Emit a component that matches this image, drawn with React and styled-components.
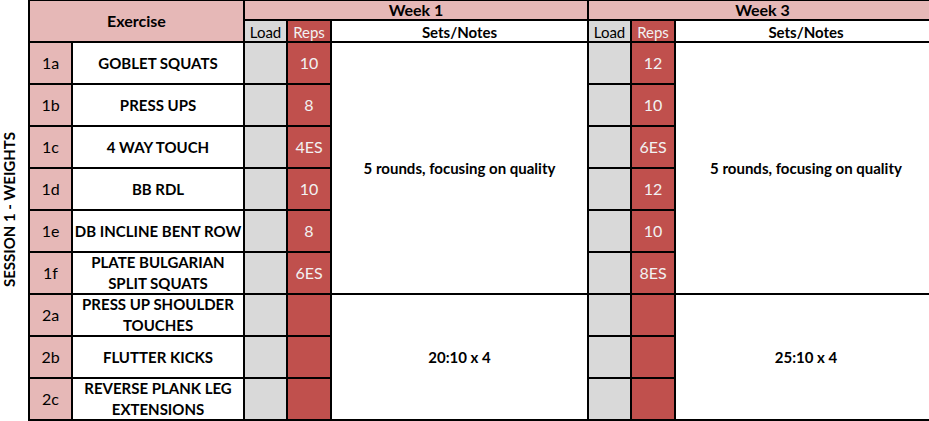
import React from "react";
import styled, { createGlobalStyle } from "styled-components";

const GlobalStyle = createGlobalStyle`
  html, body {
    margin: 0;
    padding: 0;
    background: #ffffff;
    overflow: hidden;
  }
  body {
    font-family: "Lato", "Liberation Sans", sans-serif;
    font-size: 15px;
    color: #000000;
  }
`;

const pink = "#E6B8B7";
const red = "#C0504D";
const grey = "#D9D9D9";

const exercises = [
  { id: "1a", name: "GOBLET SQUATS", w1: "10", w3: "12" },
  { id: "1b", name: "PRESS UPS", w1: "8", w3: "10" },
  { id: "1c", name: "4 WAY TOUCH", w1: "4ES", w3: "6ES" },
  { id: "1d", name: "BB RDL", w1: "10", w3: "12" },
  { id: "1e", name: "DB INCLINE BENT ROW", w1: "8", w3: "10" },
  { id: "1f", name: "PLATE BULGARIAN SPLIT SQUATS", w1: "6ES", w3: "8ES" },
  { id: "2a", name: "PRESS UP SHOULDER TOUCHES", w1: "", w3: "" },
  { id: "2b", name: "FLUTTER KICKS", w1: "", w3: "" },
  { id: "2c", name: "REVERSE PLANK LEG EXTENSIONS", w1: "", w3: "" },
];

// notes are merged over several rows, keyed by the row they start on
const notes = {
  0: { span: 6, w1: "5 rounds, focusing on quality", w3: "5 rounds, focusing on quality" },
  6: { span: 3, w1: "20:10 x 4", w3: "25:10 x 4" },
};

export default function App() {
  return (
    <>
      <GlobalStyle />
      <Sheet>
        <SessionCell>
          <SessionText>SESSION 1 - WEIGHTS</SessionText>
        </SessionCell>
        <Grid>
          <Head $bg={pink} $cols={2} $rows={2}>Exercise</Head>
          <Head $bg={pink} $cols={3}>Week 1</Head>
          <Head $bg={pink} $cols={3}>Week 3</Head>

          <SubHead $bg={grey}>Load</SubHead>
          <SubHead $bg={red} $light>Reps</SubHead>
          <SubHead $bold>Sets/Notes</SubHead>
          <SubHead $bg={grey}>Load</SubHead>
          <SubHead $bg={red} $light>Reps</SubHead>
          <SubHead $bold>Sets/Notes</SubHead>

          {exercises.map((ex, i) => (
            <React.Fragment key={ex.id}>
              <NumCell>{ex.id}</NumCell>
              <NameCell>{ex.name}</NameCell>
              <LoadCell />
              <RepsCell>{ex.w1}</RepsCell>
              {notes[i] && <NotesCell $rows={notes[i].span}>{notes[i].w1}</NotesCell>}
              <LoadCell />
              <RepsCell>{ex.w3}</RepsCell>
              {notes[i] && <NotesCell $rows={notes[i].span}>{notes[i].w3}</NotesCell>}
            </React.Fragment>
          ))}
        </Grid>
      </Sheet>
    </>
  );
}

const Sheet = styled.div`
  display: flex;
  width: 960px;
  height: 421px;
`;

const SessionCell = styled.div`
  width: 18px;
  height: 419px;
  flex-shrink: 0;
  border-bottom: 2px solid #000;
  display: flex;
  align-items: center;
  justify-content: center;
  padding: 0 10px 11px 0;
  box-sizing: content-box;
`;

const SessionText = styled.span`
  writing-mode: vertical-rl;
  transform: rotate(180deg);
  font-weight: 700;
  white-space: nowrap;
`;

const Grid = styled.div`
  display: grid;
  grid-template-columns: 41px 170px 41px 42px 255px 41px 42px 260px;
  grid-template-rows: 18px 20px repeat(9, 40px);
  gap: 2px;
  padding: 1px 0 2px 2px;
  background: #000;
  align-self: flex-start;
`;

const Cell = styled.div`
  display: flex;
  align-items: center;
  justify-content: center;
  text-align: center;
  background: #fff;
  line-height: 20px;
`;

const Head = styled(Cell)`
  background: ${(p) => p.$bg};
  grid-column: span ${(p) => p.$cols || 1};
  grid-row: span ${(p) => p.$rows || 1};
  font-weight: 700;
  font-size: 16px;
`;

const SubHead = styled(Cell)`
  background: ${(p) => p.$bg || "#fff"};
  color: ${(p) => (p.$light ? "#F2F2F2" : "#000")};
  font-weight: ${(p) => (p.$bold ? 700 : 400)};
  padding-top: 1px;
`;

const NumCell = styled(Cell)`
  background: ${pink};
  font-size: 16px;
`;

const NameCell = styled(Cell)`
  font-weight: 700;
  padding: 0 1px;
  line-height: 21px;
`;

const LoadCell = styled(Cell)`
  background: ${grey};
`;

const RepsCell = styled(Cell)`
  background: ${red};
  color: #F2F2F2;
  font-size: 16px;
`;

const NotesCell = styled(Cell)`
  grid-row: span ${(p) => p.$rows};
  font-weight: 700;
`;
